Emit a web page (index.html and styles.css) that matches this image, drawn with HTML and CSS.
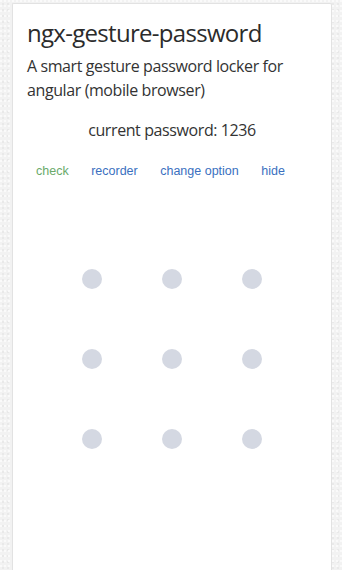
FILE: index.html
```
<!DOCTYPE html>
<html lang="en">
<head>
<meta charset="utf-8">
<title>ngx-gesture-password</title>
<link rel="stylesheet" href="styles.css">
</head>
<body>
<main class="card">
  <h1 class="title">ngx-gesture-password</h1>
  <p class="subtitle">A smart gesture password locker for angular (mobile browser)</p>
  <p class="current">current password: 1236</p>
  <nav class="actions">
    <a class="action action-check" href="#">check</a>
    <a class="action" href="#">recorder</a>
    <a class="action" href="#">change option</a>
    <a class="action" href="#">hide</a>
  </nav>
  <div class="pad">
    <span class="dot"></span><span class="dot"></span><span class="dot"></span>
    <span class="dot"></span><span class="dot"></span><span class="dot"></span>
    <span class="dot"></span><span class="dot"></span><span class="dot"></span>
  </div>
</main>
</body>
</html>
```
FILE: styles.css
```
html, body {
  margin: 0;
  padding: 0;
  height: 100%;
  overflow: hidden;
}

body {
  box-sizing: border-box;
  padding-top: 3px;
  background-color: #f2f2f2;
  background-image:
    radial-gradient(circle at 1px 1px, #fafafa 0.8px, transparent 1px),
    radial-gradient(circle at 3px 4px, #e9e9e9 0.8px, transparent 1px);
  background-size: 4px 5px, 5px 6px;
  font-family: "Open Sans", "Noto Sans", sans-serif;
  color: #333333;
}

.card {
  box-sizing: border-box;
  width: 320px;
  height: 100%;
  margin: 0 0 0 12px;
  padding: 14px 14px 0;
  background: #ffffff;
  border: 1px solid #e2e2e2;
  border-bottom: none;
  border-radius: 2px 2px 0 0;
}

.title {
  margin: 0;
  font-size: 24px;
  font-weight: 400;
  line-height: 30px;
  letter-spacing: -0.7px;
  color: #2b2b2b;
}

.subtitle {
  margin: 6px 0 0;
  font-size: 16px;
  line-height: 24px;
  letter-spacing: -0.4px;
  color: #333333;
}

.current {
  margin: 16px 0 0;
  font-size: 16px;
  line-height: 24px;
  letter-spacing: -0.4px;
  text-align: center;
  color: #333333;
}

.actions {
  display: flex;
  gap: 22.5px;
  margin: 21px 0 0 9px;
  font-family: "Liberation Sans", Arial, sans-serif;
  font-size: 12.5px;
  line-height: 16px;
}

.action {
  color: #3a70c0;
  text-decoration: none;
}

.action-check {
  color: #6aaa6a;
}

.pad {
  display: grid;
  grid-template-columns: repeat(3, 80px);
  grid-auto-rows: 80px;
  place-items: center;
  width: 240px;
  margin: 60px auto 0;
}

.dot {
  width: 20px;
  height: 20px;
  border-radius: 50%;
  background: #d4d8e2;
}
```
